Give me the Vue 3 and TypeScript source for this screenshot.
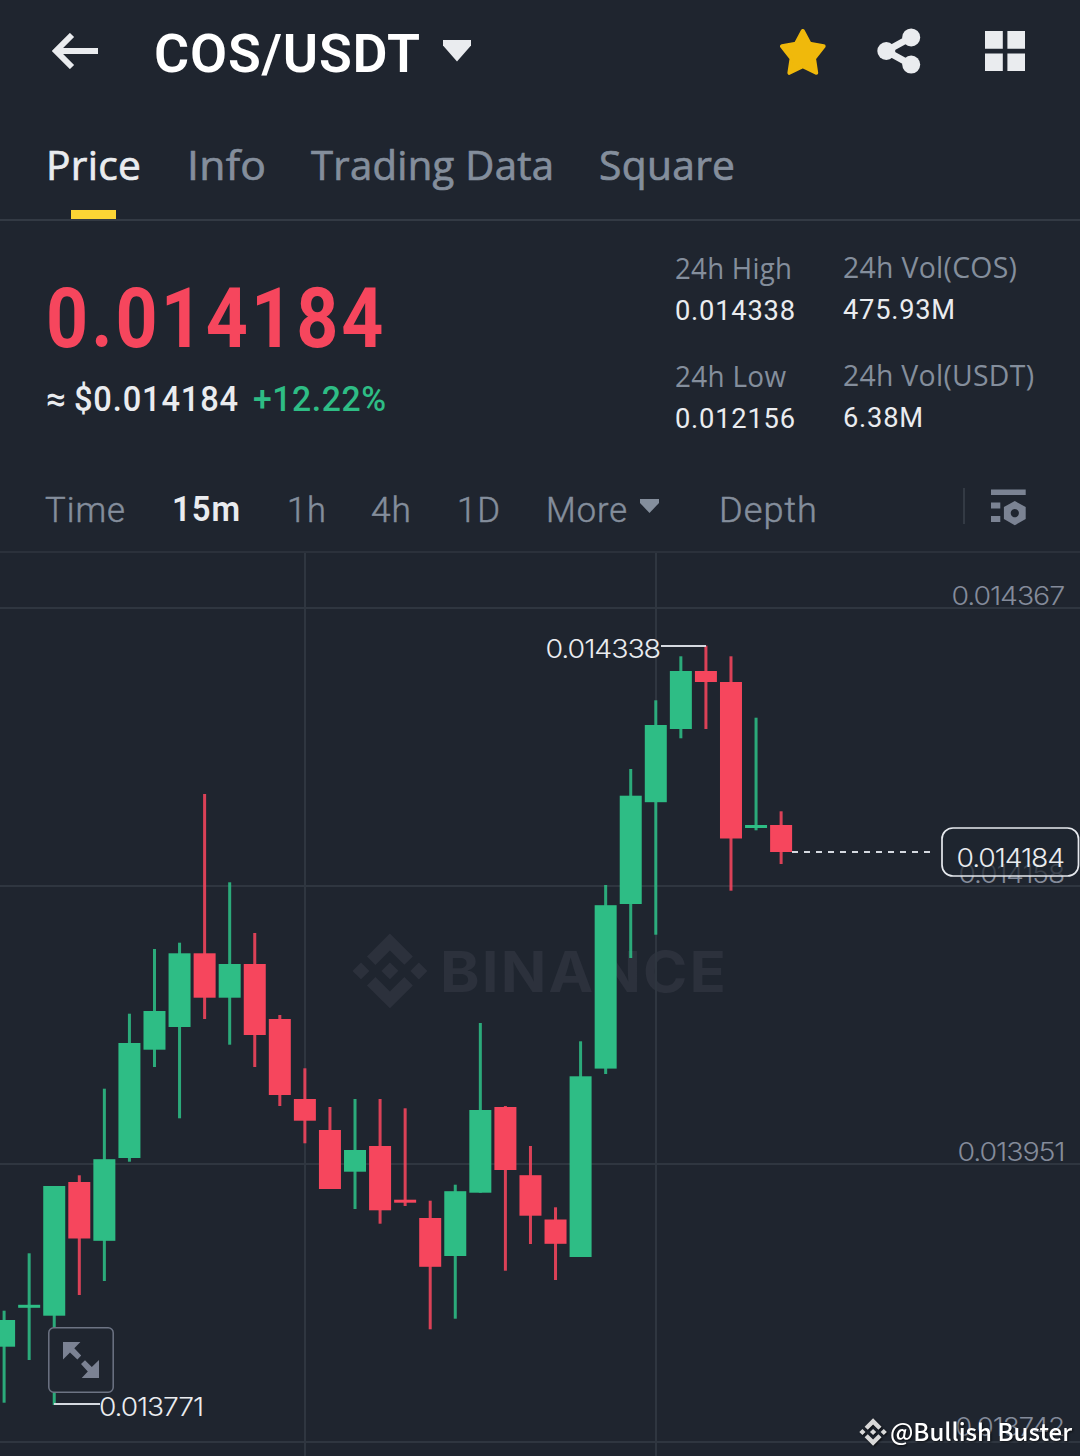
<script setup lang="ts">
import { h, type FunctionalComponent } from 'vue'

interface FitProps {
  text: string
  w: number
  size: number
  weight?: number
  font?: string
  spacing?: number
  stroke?: number
}

const CAP = 0.714

/* One line of text set to an exact advance width; its box is the cap-height box. */
const FitText: FunctionalComponent<FitProps> = (p) => {
  const height = Math.round(p.size * CAP)
  return h(
    'svg',
    { width: p.w, height, style: 'display:block;overflow:visible;flex:none', fill: 'currentColor' },
    [
      h(
        'text',
        {
          x: 0,
          y: height,
          'font-size': p.size,
          'font-weight': p.weight ?? 400,
          'font-family': `"${p.font ?? 'Roboto'}", "Liberation Sans", sans-serif`,
          'letter-spacing': p.spacing ?? 0,
          stroke: 'currentColor',
          'stroke-width': p.stroke ?? 0,
          textLength: p.w + (p.spacing ?? 0),
          lengthAdjust: 'spacingAndGlyphs',
        },
        p.text,
      ),
    ],
  )
}
FitText.props = ['text', 'w', 'size', 'weight', 'font', 'spacing', 'stroke']

const tabs = [
  { label: 'Price', w: 95, gap: 0, active: true },
  { label: 'Info', w: 79, gap: 46 },
  { label: 'Trading Data', w: 243, gap: 45 },
  { label: 'Square', w: 136, gap: 45 },
]

const stats = [
  [
    { label: '24h High', lw: 117, value: '0.014338', vw: 120 },
    { label: '24h Low', lw: 111, value: '0.012156', vw: 120 },
  ],
  [
    { label: '24h Vol(COS)', lw: 174, value: '475.93M', vw: 112 },
    { label: '24h Vol(USDT)', lw: 191, value: '6.38M', vw: 80 },
  ],
]

const intervals = [
  { label: 'Time', w: 80, gap: 0 },
  { label: '15m', w: 68, gap: 47, active: true },
  { label: '1h', w: 39, gap: 47 },
  { label: '4h', w: 40, gap: 45 },
  { label: '1D', w: 43, gap: 46 },
]

/* side, high, body top, body bottom, low (canvas y) */
type Candle = ['g' | 'r', number, number, number, number]
const candles: Candle[] = [
  ['g', 1310.7, 1320, 1346.7, 1402.7],
  ['g', 1253.3, 1304.8, 1307.8, 1360],
  ['g', 1186, 1186, 1315.7, 1405],
  ['r', 1175.3, 1182, 1238.5, 1295],
  ['g', 1088.7, 1159.2, 1240.8, 1281],
  ['g', 1013.7, 1043, 1158, 1161.7],
  ['g', 949, 1011, 1049.7, 1067],
  ['g', 942.7, 953.3, 1027, 1118.3],
  ['r', 794, 953.3, 997.7, 1019],
  ['g', 882.3, 964, 997.7, 1044.7],
  ['r', 933, 964, 1035, 1067],
  ['r', 1015, 1019, 1095, 1106],
  ['r', 1068.3, 1099, 1120.7, 1143.3],
  ['r', 1107, 1130, 1189, 1189],
  ['g', 1099, 1150, 1171.7, 1209],
  ['r', 1099, 1146, 1210.3, 1223.7],
  ['r', 1108.3, 1199.7, 1202.7, 1206],
  ['r', 1200.7, 1218, 1266.8, 1329.3],
  ['g', 1184.7, 1191.2, 1256, 1318.7],
  ['g', 1023, 1110, 1192.7, 1192.7],
  ['r', 1106, 1107, 1170, 1270.7],
  ['r', 1146, 1175.2, 1215.7, 1244],
  ['r', 1207.3, 1219.5, 1243.8, 1280],
  ['g', 1041.3, 1076.3, 1257, 1257],
  ['g', 885, 905.2, 1068.6, 1074],
  ['g', 769, 795.7, 904, 958],
  ['g', 700.3, 725, 802.2, 934.7],
  ['g', 656.3, 671, 729, 738.3],
  ['r', 645.7, 671, 682, 729],
  ['r', 656.3, 682, 838.5, 890.7],
  ['g', 717.7, 825, 828, 830.3],
  ['r', 811.3, 825, 852, 864],
]
const cx = (i: number): number => 4.1 + i * 25.065

const gridY = [608, 886, 1164, 1442]
const gridX = [305, 656]

const axisLabels = [
  { text: '0.014367', x: 951.5, y: 605, w: 112.5 },
  { text: '0.014158', x: 958.5, y: 883, w: 105.5 },
  { text: '0.013951', x: 957.5, y: 1161, w: 107 },
  { text: '0.013742', x: 955, y: 1436, w: 109 },
]
const marks = [
  { text: '0.014338', x: 545.5, y: 658, w: 114.5 },
  { text: '0.014184', x: 956.5, y: 867, w: 107.5 },
  { text: '0.013771', x: 99, y: 1416, w: 104 },
]

const logo =
  'M16.624 13.92l2.7175 2.7155-7.353 7.353-7.353-7.352 2.7175-2.7165 4.6355 4.6595zM21.26 9.284L24 12l-2.7154 2.7164L18.568 12zM11.988 9.285l2.7164 2.6914-2.7164 2.7174L9.272 12zM2.716 9.284L5.409 12l-2.6915 2.6924L0 12zM11.9885.0115l7.353 7.329-2.7174 2.7154-4.6356-4.6356-4.6355 4.6595-2.7174-2.7154z'
</script>

<template>
  <div class="screen">
    <header class="header">
      <svg class="back" width="46" height="36" viewBox="0 0 46 36">
        <path d="M46 18H4M20 2L4 18l16 16" fill="none" stroke="#eaecef" stroke-width="6" />
      </svg>
      <FitText class="title" text="COS/USDT" :w="266" :size="54" :weight="600" :spacing="0.8" />
      <svg class="title-caret" width="28" height="22" viewBox="0 0 28 22">
        <path d="M0 0H28V5.5L14 21.5 0 5.5z" fill="#eaecef" />
      </svg>
      <div class="actions">
        <svg class="star" width="46" height="46" viewBox="780 29 46 46">
          <path
            d="M802.8 31L809.6 43.8 823.6 46.3 814 58.4 816.2 72.8 802.8 66.2 789.4 72.8 791.6 58.4 782 46.3 796 43.8z"
            fill="#f0b90b" stroke="#f0b90b" stroke-width="4" stroke-linejoin="round"
          />
        </svg>
        <svg class="share" width="44" height="46" viewBox="877 28 44 46">
          <path d="M911.2 37.3L886.2 51l25 13.7" fill="none" stroke="#eaecef" stroke-width="6.8" />
          <g fill="#eaecef">
            <circle cx="886.3" cy="51" r="9" />
            <circle cx="911.2" cy="37.4" r="9" />
            <circle cx="911.2" cy="64.6" r="9" />
          </g>
        </svg>
        <svg class="apps" width="40" height="40" viewBox="0 0 40 40">
          <path d="M0 0h17.8v17.8H0zM22.4 0H40v17.8H22.4zM0 22.4h17.8V40H0zM22.4 22.4H40V40H22.4z" fill="#eaecef" />
        </svg>
      </div>
    </header>

    <nav class="tabs">
      <div
        v-for="t in tabs" :key="t.label" class="tab" :class="{ active: t.active }"
        :style="{ marginLeft: t.gap + 'px' }"
      >
        <FitText :text="t.label" :w="t.w" :size="40" :weight="500" :spacing="0.3" :stroke="0.7" font="Open Sans" />
      </div>
    </nav>

    <section class="summary">
      <div class="quote">
        <FitText class="last" text="0.014184" :w="337" :size="84" :weight="700" :spacing="3.5" />
        <div class="fiat">
          <FitText text="≈" :w="20" :size="35" :weight="500" />
          <FitText class="usd" text="$0.014184" :w="164" :size="35" :weight="500" :spacing="0.9" />
          <FitText class="change" text="+12.22%" :w="133" :size="35" :weight="500" :spacing="0.6" />
        </div>
      </div>
      <div class="stats">
        <div v-for="(col, c) in stats" :key="c" class="stat-col">
          <div v-for="s in col" :key="s.label" class="stat">
            <FitText class="stat-label" :text="s.label" :w="s.lw" :size="28.5" :spacing="0.3" font="Open Sans" />
            <FitText class="stat-value" :text="s.value" :w="s.vw" :size="28.5" :spacing="0.8" />
          </div>
        </div>
      </div>
    </section>

    <div class="toolbar">
      <div
        v-for="i in intervals" :key="i.label" class="interval" :class="{ active: i.active }"
        :style="{ marginLeft: i.gap + 'px' }"
      >
        <FitText
          :text="i.label" :w="i.w" :size="34.5" :spacing="1"
          :weight="i.active ? 600 : 300" :stroke="i.active ? 0 : 0.5"
        />
      </div>
      <FitText class="more" text="More" :w="81" :size="34.5" :spacing="1" :weight="300" :stroke="0.5" />
      <svg class="more-caret" width="20" height="14" viewBox="0 0 20 14">
        <path d="M0 0H19V4L9.5 14 0 4z" fill="#848e9c" />
      </svg>
      <FitText class="depth" text="Depth" :w="98" :size="34.5" :spacing="1" :weight="300" :stroke="0.5" />
      <i class="divider"></i>
      <svg class="config" width="36" height="37" viewBox="990 489 36 37">
        <path
          d="M991 489.5h34.7v5.6H991zM991 502.6h9.3v5.8H991zM991 516h9.3v6H991z"
          fill="#7b8393"
        />
        <path
          d="M1014.8 501l10.9 6v12l-10.9 6.2-10.9-6.2v-12zM1014.8 509a4.1 4.1 0 1 0 .01 0z"
          fill="#7b8393" fill-rule="evenodd"
        />
      </svg>
    </div>

    <svg class="chart" width="1080" height="903" viewBox="0 553 1080 903">
      <g class="watermark">
        <path :d="logo" transform="translate(352.5 933.5) scale(3.12)" />
        <text
          x="440" y="992" font-size="57" font-weight="700" letter-spacing="2"
          textLength="288" lengthAdjust="spacingAndGlyphs"
        >BINANCE</text>
      </g>
      <g class="grid">
        <path v-for="y in gridY" :key="'h' + y" :d="`M0 ${y}H1080`" />
        <path v-for="x in gridX" :key="'v' + x" :d="`M${x} 553V1456`" />
      </g>
      <g v-for="(k, i) in candles" :key="i" :class="k[0] === 'g' ? 'up' : 'down'">
        <rect class="wick" :x="cx(i) - 1.5" :y="k[1]" width="3" :height="k[4] - k[1]" />
        <rect :x="cx(i) - 11" :y="k[2]" width="22" :height="k[3] - k[2]" />
      </g>

      <g class="axis">
        <text
          v-for="a in axisLabels" :key="a.text" :x="a.x" :y="a.y"
          :textLength="a.w" lengthAdjust="spacingAndGlyphs"
        >{{ a.text }}</text>
      </g>

      <path d="M661 646H706M54 1404H100" stroke="#d5d9e0" stroke-width="1.8" />
      <path d="M792 852H932" stroke="#d5d9e0" stroke-width="1.8" stroke-dasharray="6 6" />
      <rect
        x="942" y="828" width="136.5" height="48" rx="11"
        fill="#1f252f" fill-opacity=".72" stroke="#e6e9ee" stroke-width="1.7"
      />
      <g class="mark">
        <text
          v-for="m in marks" :key="m.text" :x="m.x" :y="m.y"
          :textLength="m.w" lengthAdjust="spacingAndGlyphs"
        >{{ m.text }}</text>
      </g>

      <rect x="48.8" y="1327.8" width="64.4" height="64.4" rx="5" fill="#1f252f" stroke="#6d7484" stroke-width="1.5" />
      <path
        d="M63 1342H80.4L74.3 1348.2 81.2 1355.6 77.4 1359.4 70 1352.4 63 1359.6zM99 1378H81.7L87.8 1371.6 81 1364 85 1360.2 91.8 1367 99 1360z"
        fill="#7b8293"
      />

      <g class="credit">
        <path :d="logo" transform="translate(859.3 1418.2) scale(1.15)" fill="#d8d8d8" />
        <text x="890" y="1441" font-size="24" textLength="182" lengthAdjust="spacingAndGlyphs">@Bullish Buster</text>
      </g>
    </svg>
  </div>
</template>

<style>
body {
  margin: 0;
  background: #1f252f;
}
</style>

<style scoped>
.screen {
  display: flex;
  flex-direction: column;
  width: 1080px;
  height: 1456px;
  overflow: hidden;
  background: #1f252f;
  color: #eaecef;
  font-family: Roboto, 'Liberation Sans', sans-serif;
}
.header {
  display: flex;
  align-items: center;
  height: 102px;
  flex: none;
  padding: 0 55px 0 52px;
}
.title {
  margin: 3px 0 0 56px;
  color: #fff;
}
.title-caret {
  margin-left: 23px;
}
.actions {
  display: flex;
  align-items: center;
  margin-left: auto;
}
.star {
  margin-top: 2px;
}
.share {
  margin-left: 51px;
}
.apps {
  margin-left: 64px;
}
.tabs {
  display: flex;
  box-sizing: border-box;
  height: 119px;
  flex: none;
  padding-left: 46px;
  border-bottom: 2px solid #333a44;
  color: #848e9c;
}
.tab {
  position: relative;
  padding-top: 49px;
}
.tab.active {
  color: #eaecef;
}
.tab.active::after {
  content: '';
  position: absolute;
  left: 25px;
  bottom: 0;
  width: 45px;
  height: 9px;
  background: #fcd535;
}
.summary {
  display: flex;
  justify-content: space-between;
  height: 262px;
  flex: none;
  box-sizing: border-box;
  padding: 38px 46px 0 46px;
}
.last {
  margin-top: 28px;
  color: #f6465d;
}
.fiat {
  display: flex;
  margin-top: 39px;
}
.usd {
  margin-left: 8px;
}
.change {
  margin-left: 15px;
  color: #2ebd85;
}
.stats {
  display: flex;
  width: 359px;
}
.stat-col {
  width: 168px;
}
.stat-col + .stat-col {
  margin-top: -1px;
}
.stat {
  height: 108px;
}
.stat-label {
  color: #848e9c;
}
.stat-value {
  margin-top: 21px;
}
.toolbar {
  display: flex;
  align-items: flex-start;
  height: 70px;
  flex: none;
  box-sizing: border-box;
  padding: 0 54px 0 45px;
  border-bottom: 2px solid #2b313b;
  color: #848e9c;
}
.interval,
.more,
.depth {
  margin-top: 14px;
}
.interval.active {
  margin-top: 13px;
  color: #eaecef;
}
.more {
  margin-left: 46px;
}
.more-caret {
  margin: 16px 0 0 13px;
}
.depth {
  margin-left: 59px;
}
.divider {
  width: 2px;
  height: 36px;
  margin: 5px 25px 0 auto;
  background: #333a44;
}
.config {
  margin-top: 6px;
}
.chart {
  display: block;
  flex: none;
}
.watermark {
  fill: #2c313c;
  font-family: Inter, 'Liberation Sans', sans-serif;
}
.grid path {
  stroke: #2f3640;
  stroke-width: 2;
}
.up {
  fill: #2ebd85;
}
.down {
  fill: #f6465d;
}
.wick {
  opacity: 0.88;
}
.axis,
.mark {
  font-family: Inter, 'Liberation Sans', sans-serif;
  font-size: 25.5px;
  font-weight: 300;
  letter-spacing: -1px;
}
.axis {
  fill: #848b9a;
}
.mark {
  fill: #eaecef;
}
.credit {
  fill: #fff;
  font-family: 'Noto Sans CJK SC', 'Noto Sans', sans-serif;
  font-weight: 500;
  filter: drop-shadow(1px 1px 1px rgba(0, 0, 0, 0.7));
}
</style>
